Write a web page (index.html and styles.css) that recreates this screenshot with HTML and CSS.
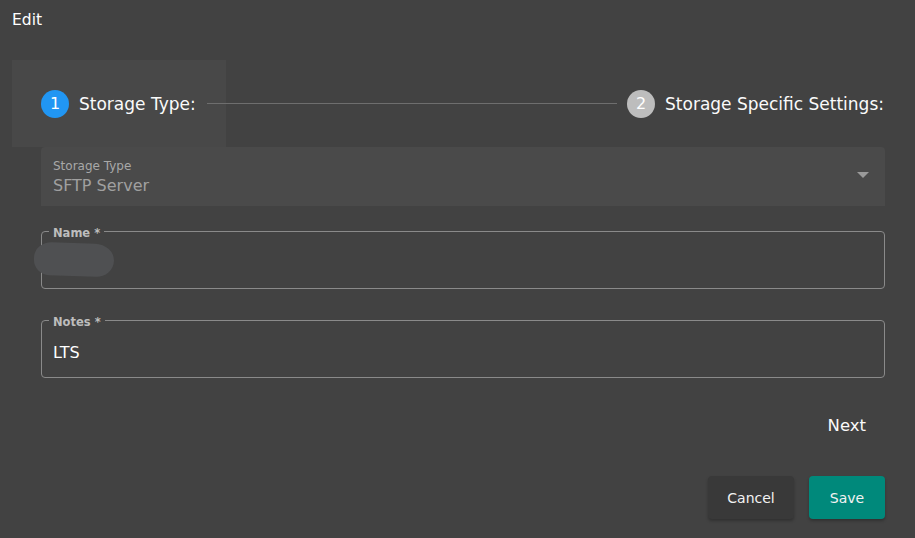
FILE: index.html
```html
<!DOCTYPE html>
<html>
<head>
<meta charset="utf-8">
<link rel="stylesheet" href="styles.css">
</head>
<body>
<div class="dialog">
  <div class="title">Edit</div>
  <div class="stepper">
    <div class="step step-active">
      <span class="step-icon icon-active">1</span>
      <span class="step-label">Storage Type:</span>
    </div>
    <div class="connector"></div>
    <div class="step">
      <span class="step-icon icon-idle">2</span>
      <span class="step-label">Storage Specific Settings:</span>
    </div>
  </div>
  <div class="form">
    <div class="select">
      <div class="select-text">
        <div class="select-label">Storage Type</div>
        <div class="select-value">SFTP Server</div>
      </div>
      <svg class="select-arrow" width="12" height="6" viewBox="0 0 12 6"><path d="M0 0 L12 0 L6 6 Z" fill="#9a9a9a"/></svg>
    </div>
    <div class="field field-name">
      <span class="field-label">Name *</span>
      <div class="field-value"></div>
      <div class="blob"></div>
    </div>
    <div class="field field-notes">
      <span class="field-label">Notes *</span>
      <div class="field-value">LTS</div>
    </div>
    <div class="next-row">
      <span class="next">Next</span>
    </div>
  </div>
  <div class="actions">
    <button class="btn btn-cancel">Cancel</button>
    <button class="btn btn-save">Save</button>
  </div>
</div>
</body>
</html>
```
FILE: styles.css
```css
html, body {
  margin: 0;
  padding: 0;
  background: #424242;
  font-family: "DejaVu Sans", Verdana, sans-serif;
  color: #ffffff;
}
.dialog {
  width: 915px;
  height: 538px;
  box-sizing: border-box;
}
.title {
  padding: 10px 12px 0;
  font-size: 15.5px;
  line-height: 20px;
  height: 20px;
}
.stepper {
  display: flex;
  align-items: center;
  margin-top: 30px;
  padding: 0 31px 0 12px;
  height: 87px;
}
.step {
  display: flex;
  align-items: center;
  height: 87px;
}
.step-active {
  background: #484848;
  padding: 0 30px 0 29px;
  box-sizing: border-box;
  width: 214px;
}
.step-icon {
  width: 28px;
  height: 28px;
  border-radius: 50%;
  display: flex;
  align-items: center;
  justify-content: center;
  font-size: 16px;
  color: #fff;
  flex: none;
}
.icon-active { background: #2196f3; }
.icon-idle { background: #bdbdbd; }
.step-label {
  margin-left: 10px;
  font-size: 17px;
  line-height: 20px;
  color: #fafafa;
  white-space: nowrap;
}
.connector {
  flex: 1;
  height: 1px;
  background: #6e6e6e;
  margin: 0 10px 0 -19px;
  position: relative;
}
.form {
  padding: 0 30px 0 41px;
}
.select {
  display: flex;
  align-items: center;
  background: #4a4a4a;
  border-radius: 4px 4px 0 0;
  height: 59px;
  padding: 0 16px 0 12px;
  box-sizing: border-box;
}
.select-text {
  flex: 1;
  padding-top: 1px;
}
.select-label {
  font-size: 12px;
  line-height: 15px;
  color: #a8a8a8;
}
.select-value {
  margin-top: 2px;
  font-size: 16px;
  line-height: 19px;
  color: #a0a0a0;
}
.select-arrow {
  margin-top: -4px;
}
.field {
  position: relative;
  border: 1px solid #8a8a8a;
  border-radius: 4px;
  height: 58px;
  box-sizing: border-box;
  padding: 22px 11px 0;
}
.field-name { margin-top: 25px; }
.field-notes { margin-top: 31px; }
.field-label {
  position: absolute;
  left: 7px;
  top: -6px;
  padding: 0 4px;
  background: #424242;
  font-size: 11.5px;
  font-weight: bold;
  line-height: 14px;
  color: #bdbdbd;
}
.field-value {
  font-size: 16px;
  line-height: 19px;
  height: 19px;
  color: #fff;
}
.blob {
  position: absolute;
  left: -8px;
  top: 11px;
  width: 80px;
  height: 33px;
  background: #4f5052;
  border-radius: 18px 20px 18px 16px / 16px 17px 17px 16px;
  transform: rotate(2deg);
}
.next-row {
  display: flex;
  justify-content: flex-end;
  padding: 38px 19px 0 0;
}
.next {
  font-size: 16.5px;
  line-height: 20px;
  color: #fafafa;
}
.actions {
  display: flex;
  justify-content: flex-end;
  gap: 15px;
  padding: 40px 30px 0 0;
}
.btn {
  font-family: "DejaVu Sans", Verdana, sans-serif;
  font-size: 14px;
  height: 43px;
  border: none;
  border-radius: 4px;
  color: #f2f2f2;
  padding: 0;
  box-shadow: 0 2px 3px rgba(0,0,0,0.25);
}
.btn-cancel {
  width: 86px;
  background: #393939;
}
.btn-save {
  width: 76px;
  background: #00897b;
}
```
